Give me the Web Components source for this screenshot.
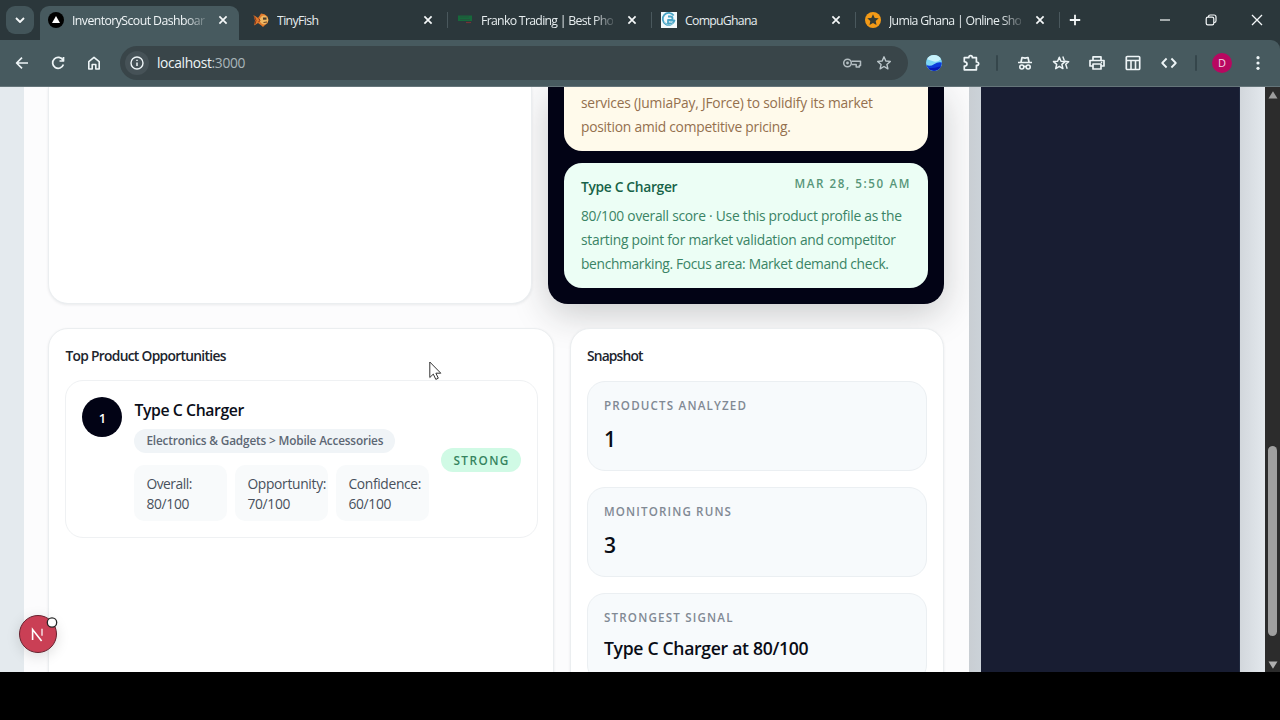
<!DOCTYPE html>
<html lang="en">
<head>
<meta charset="utf-8">
<title>InventoryScout Dashboard</title>
<style>
html,body{margin:0;height:100%;background:#000;overflow:hidden}
body{font-family:"Open Sans","Noto Sans",sans-serif}
</style>
</head>
<body>
<scout-app></scout-app>
<script>
const define = (name, html, ready) => customElements.define(name, class extends HTMLElement {
  connectedCallback() {
    if (this.shadowRoot) return;
    const t = document.createElement('template');
    t.innerHTML = html;
    this.attachShadow({mode: 'open'}).append(t.content.cloneNode(true));
    if (ready) ready(this, this.shadowRoot);
  }
});

/* One line of text whose tracking is adjusted to a given line width. */
define('fit-text', `<style>:host{display:block;white-space:nowrap;width:max-content}</style><slot></slot>`, el => {
  const n = el.textContent.length;
  if (n > 1) el.style.letterSpacing = ((+el.getAttribute('w') - el.getBoundingClientRect().width) / (n - 1)).toFixed(3) + 'px';
});

const icons = {
  chevron: '<path d="M4 6l4 4 4-4" stroke-width="1.8"/>',
  x: '<path d="M4.4 4.4l7.2 7.2M11.6 4.4l-7.2 7.2" stroke-width="1.7"/>',
  plus: '<path d="M8 2.8v10.4M2.8 8h10.4" stroke-width="1.8"/>',
  min: '<path d="M3 8h10" stroke-width="1.2"/>',
  restore: '<rect x="3.2" y="5.2" width="7.6" height="7.6" rx="1.6" stroke-width="1.2"/><path d="M5.5 5V4.6c0-1 .8-1.6 1.7-1.6H11c1.2 0 2 .8 2 2v3.800c0 1-.6 1.700-1.600 1.700H11" stroke-width="1.2"/>',
  close: '<path d="M3 3l10 10M13 3L3 13" stroke-width="1.3"/>',
  back: '<path d="M14 8H2.800M8 2.600L2.600 8 8 13.400" stroke-width="1.700"/>',
  reload: '<path d="M13 5.200A5.500 5.500 0 1 0 13.400 9.500M13.500 2v4H9.500" stroke-width="1.700"/>',
  home: '<path d="M2.800 6.700L8 2.400l5.200 4.300V14H9.800V9.500H6.200V14H2.800z" stroke-width="1.600"/>',
  info: '<circle cx="8" cy="8" r="6" stroke-width="1.400"/><path d="M8 7.400v3.700M8 4.700v1.400" stroke-width="1.500"/>',
  key: '<circle cx="3.500" cy="8" r="3.800" stroke-width="1.500"/><circle cx="3.500" cy="8" r="1.400" fill="currentColor" stroke="none"/><path d="M7.500 6.200H16.500V10.500H15.400V12H12.200V9.600H7.700" stroke-width="1.500"/>',
  star: '<path d="M8 1.800l1.800 4.200 4.500.4-3.400 3 1 4.400L8 11.500l-3.900 2.300 1-4.400-3.400-3 4.500-.4z" stroke-width="1.400"/>',
  ext: '<path d="M1.300 2.700H5.800C5.800 1.300 6.500.6 7.600.6S9.400 1.300 9.400 2.700H13.400V7C15 7 15.700 7.600 15.700 8.700S15 10.400 13.400 10.400V14.800H1.300V11.200C3.200 10.900 4 10.100 4 8.900S3.200 7 1.300 6.700z" stroke-width="1.700"/>',
  incog: '<path d="M1 7.500H15M4 7L5 2.500 8 3.200 11 2.500 12 7M6.700 11.700Q8 10.800 9.300 11.700" stroke-width="1.700"/><circle cx="4.800" cy="12" r="2" stroke-width="1.600"/><circle cx="11.200" cy="12" r="2" stroke-width="1.600"/>',
  stars: '<path d="M6.300 2.200l1.700 4 4.100.4-3.200 2.800 1 4.200-3.600-2.300-3.600 2.300 1-4.200L.500 6.600l4.100-.4z" stroke-width="1.500"/><path d="M9.800 1.500l1.500 3.900M11.500 6.200l4.200.5-3 2.500 1.500 4.600" stroke-width="1.400"/>',
  print: '<path d="M4 5V1.900H12V5M4 11H1V5.500H15V11H12" stroke-width="1.700"/><path d="M4 9H12V14H4z" stroke-width="1.700"/><circle cx="12.500" cy="7.400" r=".8" fill="currentColor" stroke="none"/>',
  table: '<rect x="1.300" y="1.500" width="13.400" height="13" rx="1" stroke-width="1.700"/><path d="M1.500 5.500H14.500M6 5.500V14M10.500 5.500V14" stroke-width="1.600"/>',
  code: '<path d="M5.600 3.500L1.200 8l4.400 4.500M10.400 3.500L14.800 8l-4.400 4.500" stroke-width="1.800"/>',
  dots: '<g fill="currentColor" stroke="none"><circle cx="8" cy="2.700" r="1.600"/><circle cx="8" cy="8" r="1.600"/><circle cx="8" cy="13.300" r="1.600"/></g>',
  orb: '<g stroke="none"><circle cx="8" cy="8" r="8" fill="#7bd5f5"/><path d="M1 4.200A8 8 0 0 1 15 4.200Q11 7.500 8 6.500T1 4.200z" fill="#c8f2fb"/><path d="M.2 9.800Q4 12 8 9.200T15.900 7.500A8 8 0 0 1 .2 9.800z" fill="#0b3bdb"/><path d="M2 13.200Q9 13 15.200 11.200A8 8 0 0 1 2 13.200z" fill="#0718b8"/></g>',
  vercel: '<g stroke="none"><circle cx="8" cy="8" r="8" fill="#000"/><path d="M8 4l4 7H4z" fill="#fff"/></g>',
  fish: '<g stroke="none"><path d="M.5 3l4.500 3 1.500-2L8 1.500l3.500.8 3 2.200 1 3.500-1 3.200-3 2.300-1.500 1.500-2-1.700L5 11l-3.800 2.500L2 8.500z" fill="#e07a2c"/><ellipse cx="11" cy="8" rx="4.200" ry="4.400" fill="#efb862"/><path d="M5.500 6.500l1.500 1.700-1.500 2M1.500 4.500l1.500 4-1 3.500" stroke="#8b351a" fill="none"/><rect x="10" y="5.500" width="3.500" height="2.200" fill="#4c3c2c"/><path d="M10.500 10.500l3.500-.5" stroke="#684329"/></g>',
  franko: '<g stroke="none"><rect x="1" y="3.500" width="14" height="5.500" fill="#17683b"/><path d="M3 5h9M3 7.500h10" stroke="#23543c"/><path d="M9 10.500h5" stroke="#743335" stroke-width="1.200"/></g>',
  compu: '<rect width="16" height="16" fill="#f3f9fb" stroke="none"/><path d="M12.700 3.500A6 6 0 1 0 13.500 8.500H8.500M7 4.500h2.500q2 0 2 1.700T9.500 8H7v3.500h3.500" stroke="#48a4c6" stroke-width="1.800"/><path d="M3 10Q7 15 13 11" stroke="#8cc9db" stroke-width="1"/>',
  jumia: '<circle cx="8" cy="8" r="8" fill="#f39a17" stroke="none"/><path d="M8 2.200l1.700 3.700 4 .4-3 2.700.8 4L8 11l-3.500 2 .8-4-3-2.700 4-.4z" fill="#353b34" stroke="none"/>',
  up: '<path d="M8 4.200L12.500 11.500H3.500z" fill="#9d9d9d" stroke="none"/>',
  down: '<path d="M8 11.800L12.500 4.500H3.500z" fill="#b0b0b0" stroke="none"/>'
};
define('ui-icon', `<style>:host{display:block;width:16px;height:16px;flex:none}svg{display:block;width:100%;height:100%;overflow:visible}</style>
<svg viewBox="0 0 16 16" fill="none" stroke="currentColor" stroke-linejoin="round"></svg>`, (el, r) => {
  r.querySelector('svg').innerHTML = icons[el.getAttribute('name')];
});

define('browser-tab', `<style>
:host{display:flex;box-sizing:border-box;width:204px;height:34px;padding:0 0 6px 9px;align-items:center;color:#e7edef;font-size:12.300px;flex:none}
:host([active]){width:199px;margin-right:5px;padding-left:8px;background:#475a5f;border-radius:9px 9px 0 0;color:#f0f5f7}
.t{width:133px;margin-left:8px;overflow:hidden;line-height:20px;padding-top:2px}
:host([fade]) .t{-webkit-mask-image:linear-gradient(90deg,#000 85%,#0003)}
.x{margin-left:11px;color:#f5f8f9}
:host([active]) .x{margin-left:10px}
.s{width:1px;height:16px;background:#4a585d;margin-left:11px}
:host([active]) .s{display:none}
</style><slot name="i"></slot><div class="t"><slot></slot></div><ui-icon class="x" name="x"></ui-icon><div class="s"></div>`);

define('tab-strip', `<style>
:host{display:flex;height:40px;background:#2b373b;box-sizing:border-box;padding:6px 0 0 6px;color:#f5f8f9}
.m{width:28px;height:28px;border-radius:9px;background:#43555a;margin-right:6px;display:grid;place-items:center}
.plus{margin:6px 0 0 7px}.w{margin-left:auto;display:flex;gap:30px;padding:6px 15px 0 0}
</style>
<div class="m"><ui-icon name="chevron"></ui-icon></div>
<browser-tab active fade><ui-icon slot="i" name="vercel"></ui-icon><fit-text w="133">InventoryScout Dashboar</fit-text></browser-tab>
<browser-tab><ui-icon slot="i" name="fish"></ui-icon><fit-text w="42">TinyFish</fit-text></browser-tab>
<browser-tab fade><ui-icon slot="i" name="franko"></ui-icon><fit-text w="133">Franko Trading | Best Pho</fit-text></browser-tab>
<browser-tab><ui-icon slot="i" name="compu"></ui-icon><fit-text w="72.500">CompuGhana</fit-text></browser-tab>
<browser-tab fade><ui-icon slot="i" name="jumia"></ui-icon><fit-text w="133">Jumia Ghana | Online Sho</fit-text></browser-tab>
<ui-icon class="plus" name="plus"></ui-icon>
<div class="w"><ui-icon name="min"></ui-icon><ui-icon name="restore"></ui-icon><ui-icon name="close"></ui-icon></div>`);

define('browser-toolbar', `<style>
:host{display:flex;height:47px;box-sizing:border-box;background:#475a5f;align-items:center;padding:0 14px;color:#eef5f7;border-bottom:1px solid #65757a;border-radius:0 9px 0 0}
.n{display:flex;gap:20px;width:106px}
.o{display:flex;align-items:center;width:789px;height:34px;border-radius:17px;background:#394549;box-sizing:border-box;padding:0 16px 0 5px}
.i{width:24px;height:24px;border-radius:12px;background:#465257;display:grid;place-items:center;margin-right:8px}
.u{font-size:13.800px;line-height:24px}.u span{color:#a9b5b9}
.k{margin-left:auto;margin-right:16px;color:#b3bdc1}.st{color:#bdc8cc}
.orb{margin:0 21px 0 18px}
.sep{width:2px;height:16px;background:#35464b;border-radius:1px}
.r{display:flex;gap:20px;margin:0 18px 0 19px}
.av{width:20px;height:20px;border-radius:50%;background:#b80760;font-size:11px;line-height:20px;text-align:center;margin:0 18px 0 15px;color:#f5d7e5}
.ext{margin-right:17px}
</style>
<div class="n"><ui-icon name="back"></ui-icon><ui-icon name="reload"></ui-icon><ui-icon name="home"></ui-icon></div>
<div class="o"><div class="i"><ui-icon name="info"></ui-icon></div><fit-text class="u" w="88.500">localhost<span>:3000</span></fit-text><ui-icon class="k" name="key"></ui-icon><ui-icon class="st" name="star"></ui-icon></div>
<ui-icon class="orb" name="orb"></ui-icon><ui-icon class="ext" name="ext"></ui-icon><div class="sep"></div>
<div class="r"><ui-icon name="incog"></ui-icon><ui-icon name="stars"></ui-icon><ui-icon name="print"></ui-icon><ui-icon name="table"></ui-icon><ui-icon name="code"></ui-icon></div>
<div class="sep"></div><div class="av">D</div><ui-icon name="dots"></ui-icon>`);

define('panel-card', `<style>
:host{display:block;position:relative;box-sizing:border-box;background:#fff;border:1px solid #ebeef0;border-radius:20px;padding:16px;box-shadow:0 1px 3px #0f172a14}
:host([top]){border-top:0;border-radius:0 0 20px 20px}
</style><slot></slot>`);

define('alert-note', `<style>
:host{display:block;box-sizing:border-box;height:125px;padding:12px 17px;border-radius:18px;background:#ecfef5;color:#3a8465;font-size:13.800px;line-height:24px}
:host([warn]){height:64px;padding-top:4px;border-radius:0 0 18px 18px;background:#fffaeb;color:#94704e}
.h{display:flex;justify-content:space-between;height:29px;box-sizing:border-box}
:host([warn]) .h{display:none}
</style><div class="h"><slot name="n"></slot><slot name="d"></slot></div><slot></slot>`);

define('alert-feed', `<style>
:host{display:flex;flex-direction:column;gap:12px;box-sizing:border-box;width:396px;height:217px;padding:0 16px 16px;background:#020315;border-radius:0 0 20px 20px;box-shadow:0 10px 36px #1a1e2238}
.n{font-weight:600;font-size:13.800px;color:#176348;line-height:23px}
.d{font-size:11.600px;line-height:18px;color:#579679;font-weight:600}
</style>
<alert-note warn><fit-text w="292">services (JumiaPay, JForce) to solidify its market</fit-text><fit-text w="210">position amid competitive pricing.</fit-text></alert-note>
<alert-note><fit-text class="n" slot="n" w="96.500">Type C Charger</fit-text><fit-text class="d" slot="d" w="115">MAR 28, 5:50 AM</fit-text>
<fit-text w="321">80/100 overall score · Use this product profile as the</fit-text><fit-text w="315">starting point for market validation and competitor</fit-text><fit-text w="308">benchmarking. Focus area: Market demand check.</fit-text></alert-note>`);

define('score-tile', `<style>
:host{display:block;box-sizing:border-box;width:93px;height:56px;padding:9px 12px;border-radius:10px;background:#f8fafb;color:#48515c;font-size:13.800px;line-height:20px}
</style><slot></slot>`);

define('product-row', `<style>
:host{display:flex;align-items:center;box-sizing:border-box;width:473px;height:158px;border:1px solid #eff1f3;border-radius:18px;padding:16px;margin-top:13px}
.num{width:40px;height:40px;border-radius:50%;background:#020315;color:#fff;font-size:13px;font-weight:600;line-height:42px;text-align:center;align-self:flex-start;margin-right:12px}
.b{width:296px;align-self:flex-start;padding-top:1px}
.t{font-size:15.800px;font-weight:600;line-height:24px;color:#0b0e19}
.c{background:#f0f4f7;border-radius:12px;padding:0 12px;height:24px;line-height:23px;font-size:11.800px;font-weight:600;color:#5d6774;margin-top:7px;width:261px;box-sizing:border-box}
.s{display:flex;gap:8px;margin-top:12px}
.g{margin:1px 0 0 11px;width:80px;height:24px;box-sizing:border-box;padding-left:12px;line-height:24px;border-radius:12px;background:#d0fae5;color:#36845f;font-size:11.800px;font-weight:600}
</style>
<div class="num">1</div>
<div class="b"><fit-text class="t" w="110">Type C Charger</fit-text><div class="c"><fit-text w="237">Electronics &amp; Gadgets &gt; Mobile Accessories</fit-text></div>
<div class="s"><score-tile><fit-text w="46">Overall:</fit-text><fit-text w="43">80/100</fit-text></score-tile><score-tile><fit-text w="79">Opportunity:</fit-text><fit-text w="43">70/100</fit-text></score-tile><score-tile><fit-text w="73">Confidence:</fit-text><fit-text w="43">60/100</fit-text></score-tile></div></div>
<div class="g"><fit-text w="55">STRONG</fit-text></div>`);

define('stat-tile', `<style>
:host{display:block;box-sizing:border-box;height:90px;border:1px solid #ebeff2;border-radius:18px;background:#f7fafc;padding:15px 16px;margin-bottom:16px}
</style><slot></slot>`);

define('snapshot-list', `<style>
:host{display:block;margin-top:14px}
.l{font-size:11.600px;line-height:18px;font-weight:600;color:#818994}
.v{font-size:21px;line-height:30px;font-weight:600;color:#090c16;margin-top:9px}
.v.s{font-size:17.600px;line-height:28px;margin-top:7px}
</style>
<stat-tile><fit-text class="l" w="142">PRODUCTS ANALYZED</fit-text><fit-text class="v" w="11">1</fit-text></stat-tile>
<stat-tile><fit-text class="l" w="127">MONITORING RUNS</fit-text><fit-text class="v" w="12">3</fit-text></stat-tile>
<stat-tile><fit-text class="l" w="128.500">STRONGEST SIGNAL</fit-text><fit-text class="v s" w="204.500">Type C Charger at 80/100</fit-text></stat-tile>`);

define('page-scrollbar', `<style>
:host{display:flex;flex-direction:column;align-items:center;width:15px;background:#2c2c2c;box-sizing:border-box}
.t{width:9px;height:190px;border-radius:5px;background:#9f9f9f;margin-top:auto;margin-bottom:21px}
.d{margin-bottom:-1px}
</style><ui-icon name="up"></ui-icon><div class="t"></div><ui-icon class="d" name="down"></ui-icon>`);

define('dev-badge', `<style>
:host{position:absolute;z-index:2;left:19px;top:528px;width:38px;height:38px;box-sizing:border-box;border-radius:50%;background:#ca3f55;border:1.500px solid #67222f;box-shadow:0 3px 14px #0002}
svg{position:absolute;left:-1px;top:-1px;overflow:visible}
</style><svg width="38" height="38" fill="none"><path d="M13.600 25V14.500L22.600 26" stroke="#fff" stroke-width="1.600"/><path d="M23 13.800v7" stroke="#f4dce0" stroke-width="1.500"/><circle cx="33" cy="7.500" r="4.700" fill="#fff" stroke="#252525" stroke-width="1.300"/></svg>`);

define('mouse-pointer', `<style>:host{position:absolute;z-index:2;left:429px;top:274px}svg{display:block}</style>
<svg width="14" height="20"><path d="M.8 1v15.500l3.500-3.400 2.500 5.300 2.500-1.200-2.400-5h4.900z" fill="#fff" stroke="#333" stroke-width="1"/></svg>`);

define('scout-app', `<style>
:host{display:flex;flex-direction:column;width:1280px;height:672px;overflow:hidden}
.tabs{background:#2b373b}
.page{display:flex;position:relative;height:585px;overflow:hidden;background:#e4eaee}
.main{width:945px;margin-left:24px;box-sizing:border-box;padding:0 25px 0 24.400px;background:#fcfcfd;flex:none;overflow:hidden}
.row{display:flex;gap:16px}
.second{margin-top:24px}
.a{width:483.600px;height:217px}.o{width:505.600px;height:500px}.s{width:374px;height:500px}
h2{margin:0;font-size:13.800px;line-height:22px;font-weight:600;color:#20242d}
.edge{width:12px;background:linear-gradient(90deg,#c9ced3,#cbd2d8)}
.dark{width:259px;background:#181d32;border-right:1px solid #20293f;box-sizing:border-box}
.out{width:25px;background:linear-gradient(90deg,#d2d7dc,#e3e8ed)}
page-scrollbar{height:585px}
</style>
<tab-strip></tab-strip><div class="tabs"><browser-toolbar></browser-toolbar></div>
<div class="page">
<div class="main">
<div class="row"><panel-card top class="a"></panel-card><alert-feed></alert-feed></div>
<div class="row second"><panel-card class="o"><h2><fit-text w="161">Top Product Opportunities</fit-text></h2><product-row></product-row></panel-card>
<panel-card class="s"><h2><fit-text w="56.500">Snapshot</fit-text></h2><snapshot-list></snapshot-list></panel-card></div>
</div>
<div class="edge"></div><div class="dark"></div><div class="out"></div><page-scrollbar></page-scrollbar>
<dev-badge></dev-badge><mouse-pointer></mouse-pointer>
</div>`);
</script>
</body>
</html>
